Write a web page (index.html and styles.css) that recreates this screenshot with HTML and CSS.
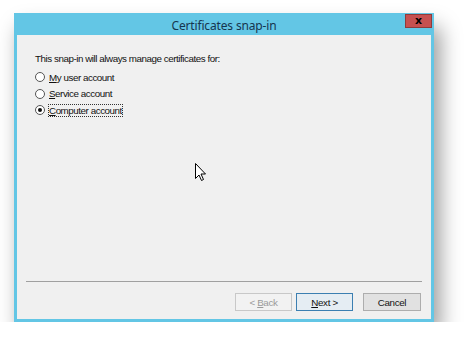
FILE: index.html
```html
<!DOCTYPE html>
<html lang="en">
<head>
	<meta charset="UTF-8">
	<title>Certificates snap-in</title>
	<link rel="stylesheet" href="styles.css">
</head>
<body>
	<div class="window">
		<div class="titlebar">
			<span class="title">Certificates snap-in</span>
			<button class="close" type="button">x</button>
		</div>
		<div class="content">
			<div class="main">
				<p class="label">This snap-in will always manage certificates for:</p>
				<label class="radio"><span class="dot"></span><span><u>M</u>y user account</span></label>
				<label class="radio"><span class="dot"></span><span><u>S</u>ervice account</span></label>
				<label class="radio"><span class="dot checked"></span><span class="focus"><u>C</u>omputer account</span></label>
			</div>
			<div class="separator"></div>
			<div class="buttons">
				<button class="btn disabled" type="button">&lt; <u>B</u>ack</button>
				<button class="btn default" type="button"><u>N</u>ext &gt;</button>
				<button class="btn cancel" type="button">Cancel</button>
			</div>
		</div>
		<svg class="cursor" width="12" height="19" viewBox="0 0 12 19">
			<path d="M0.5 0.5 L0.5 15.5 L4 12 L6.5 17.5 L8.5 16.5 L6 11 L10.5 11 Z" fill="#fff" stroke="#000" stroke-width="1"/>
		</svg>
	</div>
</body>
</html>
```

FILE: styles.css
```css
body {
	margin: 0;
	background: #fff;
	font-family: Tahoma, "DejaVu Sans", sans-serif;
}

.window {
	position: relative;
	margin: 13px 0 0 14px;
	width: 414px;
	height: 306px;
	background: #63c6e5;
	border: 3px solid #63c6e5;
	border-top: 0;
	box-shadow: 6px 14px 20px rgba(0, 0, 0, 0.4);
	display: flex;
	flex-direction: column;
}

.titlebar {
	height: 22px;
	display: flex;
	align-items: center;
	justify-content: center;
	position: relative;
}

.title {
	font-family: "Noto Sans", "Open Sans", sans-serif;
	font-size: 12px;
	letter-spacing: -0.15px;
	color: #16354f;
	margin-top: 2px;
}

.close {
	position: absolute;
	top: 1px;
	right: -1px;
	width: 27px;
	height: 14px;
	padding: 0;
	background: #c75050;
	border: 1px solid #8f3b3b;
	color: #000;
	font-family: "DejaVu Sans", sans-serif;
	font-weight: bold;
	font-size: 11px;
	line-height: 10px;
}

.content {
	flex: 1;
	background: #f0f0f0;
	display: flex;
	flex-direction: column;
	font-family: "Liberation Sans", Arial, sans-serif;
	font-size: 9.8px;
	color: #111;
	letter-spacing: -0.45px;
}

.main {
	flex: 1;
	padding: 18px 0 0 18px;
}

.label {
	margin: 0 0 5px;
}

.radio {
	display: flex;
	align-items: center;
	height: 16.5px;
	gap: 4px;
}

.dot {
	width: 8px;
	height: 8px;
	border: 1px solid #555;
	border-radius: 50%;
	background: #fff;
	position: relative;
}

.dot.checked::after {
	content: '';
	position: absolute;
	left: 2px;
	top: 2px;
	width: 4px;
	height: 4px;
	border-radius: 50%;
	background: #111;
}

.focus {
	outline: 1px dotted #333;
}

.separator {
	margin: 0 9px 0 9px;
	border-top: 1px solid #a0a0a0;
}

.buttons {
	display: flex;
	justify-content: flex-end;
	padding: 11px 10px 8px 0;
	gap: 4px;
}

.btn {
	width: 57px;
	height: 18px;
	padding: 0;
	font-family: "Liberation Sans", Arial, sans-serif;
	font-size: 9.8px;
	letter-spacing: -0.35px;
	background: #e1e1e1;
	border: 1px solid #adadad;
	color: #111;
}

.btn.disabled {
	color: #9a9a9a;
	border-color: #c8c8c8;
	background: #f2f2f2;
}

.btn.default {
	border-color: #3c7fb1;
	background: #e5edf3;
}

.btn.cancel {
	margin-left: 6px;
	width: 58px;
}

.cursor {
	position: absolute;
	left: 178px;
	top: 150px;
}
```
